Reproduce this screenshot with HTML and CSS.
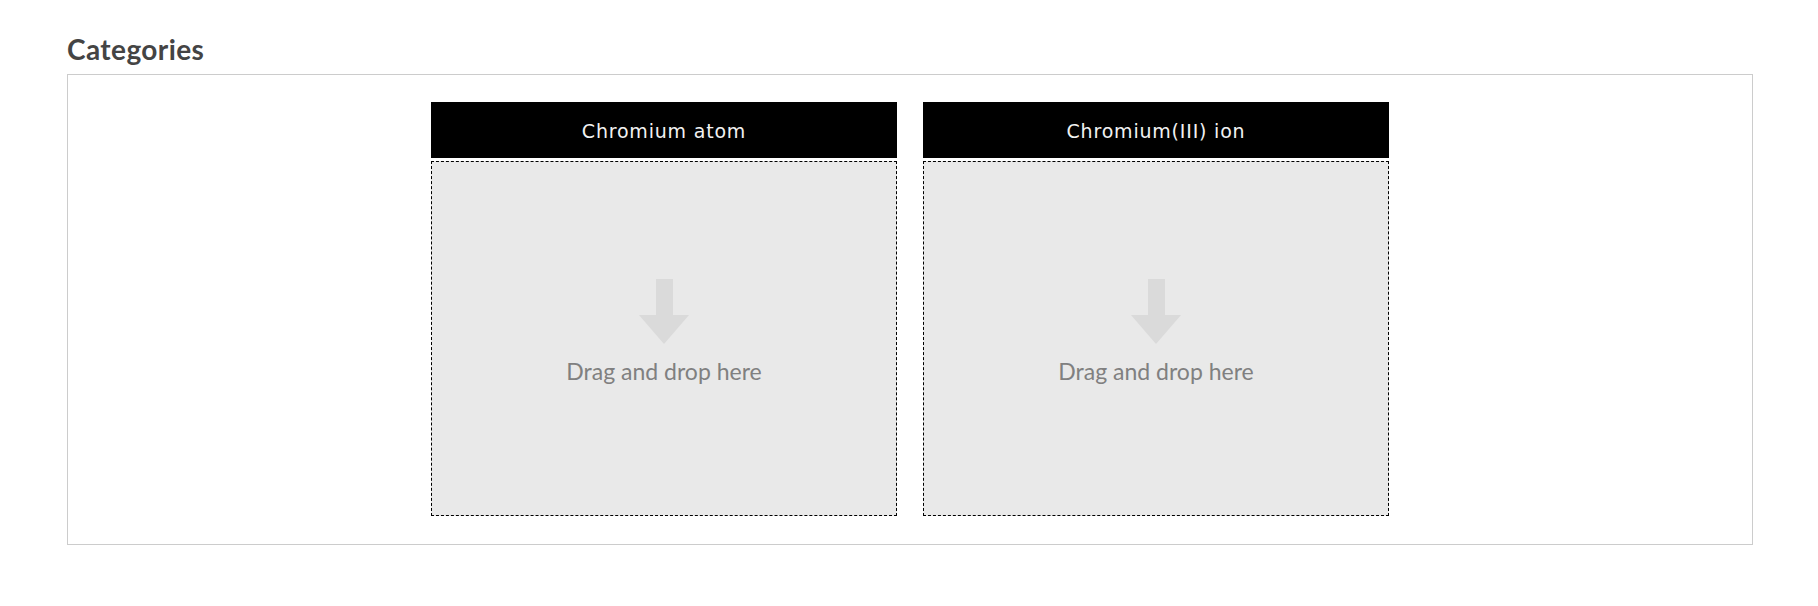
FILE: index.html
```html
<!DOCTYPE html>
<html lang="en">
<head>
    <meta charset="UTF-8">
    <meta name="viewport" content="width=device-width, initial-scale=1.0">
    <title>Categories</title>
    <link rel="stylesheet" href="styles.css">
</head>
<body>
    <div class="page">
        <h2 class="section-title">Categories</h2>
        <div class="categories">
            <div class="category">
                <div class="category-header">Chromium atom</div>
                <div class="drop-zone">
                    <svg class="drop-arrow" width="50" height="65" viewBox="0 0 50 65">
                        <rect x="17" y="0" width="17" height="37" fill="currentColor"/>
                        <polygon points="0,36 50,36 25,65" fill="currentColor"/>
                    </svg>
                    <span class="drop-text">Drag and drop here</span>
                </div>
            </div>
            <div class="category">
                <div class="category-header">Chromium(III) ion</div>
                <div class="drop-zone">
                    <svg class="drop-arrow" width="50" height="65" viewBox="0 0 50 65">
                        <rect x="17" y="0" width="17" height="37" fill="currentColor"/>
                        <polygon points="0,36 50,36 25,65" fill="currentColor"/>
                    </svg>
                    <span class="drop-text">Drag and drop here</span>
                </div>
            </div>
        </div>
    </div>
</body>
</html>
```

FILE: styles.css
```css
body {
    font-family: Lato, "Open Sans", Arial, sans-serif;
    margin: 0;
    padding: 0;
    background-color: #fff;
    color: #444;
}
.page {
    padding: 30px 65px 0 67px;
}
.section-title {
    font-size: 28px;
    font-weight: bold;
    color: #444;
    margin: 0 0 6px 0;
    line-height: 38px;
    letter-spacing: 0.4px;
}
.categories {
    display: flex;
    justify-content: center;
    gap: 26px;
    border: 1px solid #cccccc;
    padding: 27px 27px 28px;
}
.category {
    width: 466px;
}
.category-header {
    background-color: #000;
    color: #f2f2f2;
    height: 56px;
    line-height: 58px;
    text-align: center;
    font-family: "DejaVu Sans", sans-serif;
    font-size: 19px;
    letter-spacing: 0.8px;
}
.drop-zone {
    box-sizing: border-box;
    height: 355px;
    margin-top: 3px;
    border: 1px dashed #000;
    background-color: #e9e9e9;
    display: flex;
    flex-direction: column;
    align-items: center;
    justify-content: center;
    padding-bottom: 14px;
}
.drop-arrow {
    color: #dadada;
    display: block;
}
.drop-text {
    margin-top: 13px;
    font-size: 23px;
    color: #808080;
}
```
